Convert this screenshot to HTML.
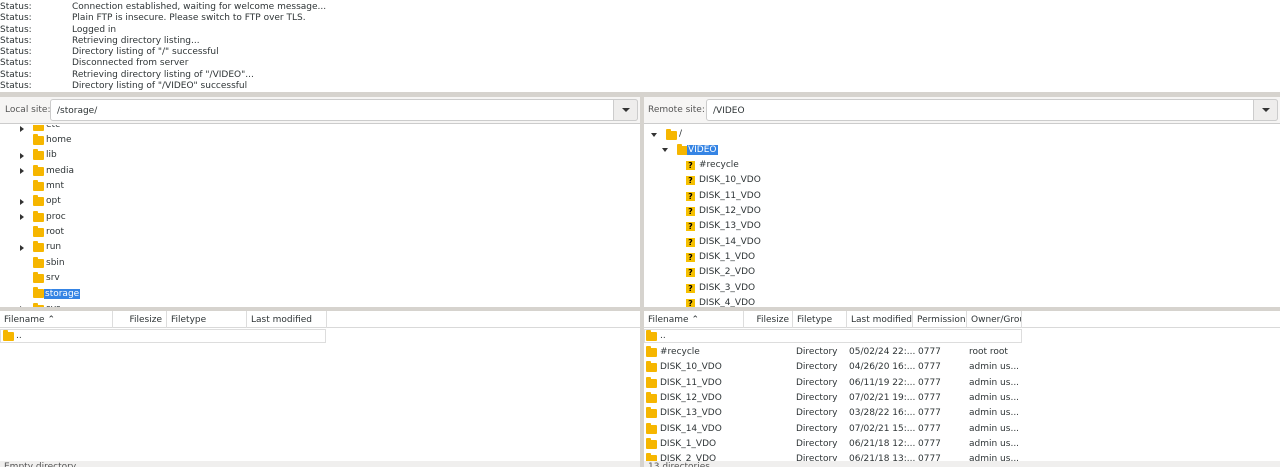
<!DOCTYPE html>
<html><head><style>
*{margin:0;padding:0;box-sizing:border-box}
body{width:1280px;height:467px;overflow:hidden;background:#fff;font-family:"DejaVu Sans","Liberation Sans",sans-serif;font-size:9px;color:#2e3436;position:relative}
.a{position:absolute;white-space:nowrap}
.f{position:absolute;width:11px;height:9px;background:#f6b600;border-radius:1px}
.f:before{content:"";position:absolute;left:0;top:-2px;width:5px;height:3px;background:#f6b600;border-radius:1px 1px 0 0}
.q{position:absolute;width:9px;height:9px;background:#f6c000;color:#000;font-weight:bold;font-size:8px;line-height:9px;text-align:center}
.tri{position:absolute;width:0;height:0;border-left:4px solid #333;border-top:3px solid transparent;border-bottom:3px solid transparent}
.trd{position:absolute;width:0;height:0;border-top:4px solid #333;border-left:3px solid transparent;border-right:3px solid transparent}
.sep{position:absolute;background:#d6d3ce}
.hdr{position:absolute;height:17px;background:#fff;border-bottom:1px solid #d9d9d9}
.hc{position:absolute;top:0;height:17px;line-height:18px;border-right:1px solid #ddd;padding-left:4px}
.sel{background:#3584e4;color:#fff;padding:0 1px}
</style></head><body>
<div class="a" style="left:0;top:2px;line-height:11.3px">Status:<br>Status:<br>Status:<br>Status:<br>Status:<br>Status:<br>Status:<br>Status:</div>
<div class="a" style="left:72px;top:2px;line-height:11.3px">Connection established, waiting for welcome message...<br>Plain FTP is insecure. Please switch to FTP over TLS.<br>Logged in<br>Retrieving directory listing...<br>Directory listing of "/" successful<br>Disconnected from server<br>Retrieving directory listing of "/VIDEO"...<br>Directory listing of "/VIDEO" successful</div>
<div class="sep" style="left:0;top:92px;width:1280px;height:5px"></div>
<div class="sep" style="left:640px;top:92px;width:4px;height:375px"></div>
<div class="a" style="left:0;top:97px;width:640px;height:27px;background:#f6f5f4;border-bottom:1px solid #ccc"></div>
<div class="a" style="left:644px;top:97px;width:636px;height:27px;background:#f6f5f4;border-bottom:1px solid #ccc"></div>
<div class="a" style="left:5px;top:105px;color:#555">Local site:</div>
<div class="a" style="left:50px;top:99px;width:588px;height:22px;background:#fff;border:1px solid #ccc;border-radius:3px;padding:6px 6px">/storage/</div>
<div class="a" style="left:613px;top:99px;width:25px;height:22px;background:#eeedec;border:1px solid #ccc;border-radius:0 3px 3px 0"></div>
<div class="trd" style="left:622px;top:108px;border-top-width:4px;border-left-width:4px;border-right-width:4px"></div>
<div class="a" style="left:648px;top:105px;color:#555">Remote site:</div>
<div class="a" style="left:706px;top:99px;width:572px;height:22px;background:#fff;border:1px solid #ccc;border-radius:3px;padding:6px 6px">/VIDEO</div>
<div class="a" style="left:1253px;top:99px;width:25px;height:22px;background:#eeedec;border:1px solid #ccc;border-radius:0 3px 3px 0"></div>
<div class="trd" style="left:1262px;top:108px;border-top-width:4px;border-left-width:4px;border-right-width:4px"></div>
<div class="a" style="left:0;top:125px;width:640px;height:182px;overflow:hidden">
<div style="position:absolute;left:0;top:1px;width:640px;height:190px">
<div class="f" style="left:33px;top:-4px"></div><div class="a" style="left:46px;top:-6px">etc</div>
<div class="tri" style="left:20px;top:0px"></div>
<div class="f" style="left:33px;top:10px"></div><div class="a" style="left:46px;top:9px">home</div>
<div class="tri" style="left:20px;top:27px"></div><div class="f" style="left:33px;top:25px"></div><div class="a" style="left:46px;top:24px">lib</div>
<div class="tri" style="left:20px;top:42px"></div><div class="f" style="left:33px;top:41px"></div><div class="a" style="left:46px;top:40px">media</div>
<div class="f" style="left:33px;top:56px"></div><div class="a" style="left:46px;top:55px">mnt</div>
<div class="tri" style="left:20px;top:73px"></div><div class="f" style="left:33px;top:71px"></div><div class="a" style="left:46px;top:70px">opt</div>
<div class="tri" style="left:20px;top:88px"></div><div class="f" style="left:33px;top:87px"></div><div class="a" style="left:46px;top:86px">proc</div>
<div class="f" style="left:33px;top:102px"></div><div class="a" style="left:46px;top:101px">root</div>
<div class="tri" style="left:20px;top:119px"></div><div class="f" style="left:33px;top:117px"></div><div class="a" style="left:46px;top:116px">run</div>
<div class="f" style="left:33px;top:133px"></div><div class="a" style="left:46px;top:132px">sbin</div>
<div class="f" style="left:33px;top:148px"></div><div class="a" style="left:46px;top:147px">srv</div>
<div class="f" style="left:33px;top:163px"></div><div class="a" style="left:44px;top:161px;height:14px;line-height:14px"><span class="sel">storage</span></div>
<div class="tri" style="left:20px;top:180px"></div><div class="f" style="left:33px;top:179px"></div><div class="a" style="left:46px;top:178px">sys</div>
</div></div>
<div class="a" style="left:644px;top:126px;width:636px;height:181px;overflow:hidden">
<div class="trd" style="left:7px;top:7px"></div><div class="f" style="left:22px;top:5px"></div><div class="a" style="left:35px;top:3px">/</div>
<div class="trd" style="left:18px;top:22px"></div><div class="f" style="left:33px;top:20px"></div><div class="a" style="left:43px;top:17px;line-height:14px"><span class="sel">VIDEO</span></div>
<div class="q" style="left:42px;top:35px">?</div><div class="a" style="left:55px;top:34px">#recycle</div>
<div class="q" style="left:42px;top:50px">?</div><div class="a" style="left:55px;top:49px">DISK_10_VDO</div>
<div class="q" style="left:42px;top:66px">?</div><div class="a" style="left:55px;top:65px">DISK_11_VDO</div>
<div class="q" style="left:42px;top:81px">?</div><div class="a" style="left:55px;top:80px">DISK_12_VDO</div>
<div class="q" style="left:42px;top:96px">?</div><div class="a" style="left:55px;top:95px">DISK_13_VDO</div>
<div class="q" style="left:42px;top:112px">?</div><div class="a" style="left:55px;top:111px">DISK_14_VDO</div>
<div class="q" style="left:42px;top:127px">?</div><div class="a" style="left:55px;top:126px">DISK_1_VDO</div>
<div class="q" style="left:42px;top:142px">?</div><div class="a" style="left:55px;top:141px">DISK_2_VDO</div>
<div class="q" style="left:42px;top:158px">?</div><div class="a" style="left:55px;top:157px">DISK_3_VDO</div>
<div class="q" style="left:42px;top:173px">?</div><div class="a" style="left:55px;top:172px">DISK_4_VDO</div>
</div>
<div class="sep" style="left:0;top:307px;width:1280px;height:4px"></div>
<div class="hdr" style="left:0;top:311px;width:640px">
<div class="hc" style="left:0;width:113px">Filename &#8963;</div>
<div class="hc" style="left:113px;width:54px;text-align:right;padding-right:4px">Filesize</div>
<div class="hc" style="left:167px;width:80px">Filetype</div>
<div class="hc" style="left:247px;width:80px">Last modified</div>
</div>
<div class="a" style="left:0;top:329px;width:326px;height:14px;border:1px solid #ddd"></div>
<div class="f" style="left:3px;top:332px"></div><div class="a" style="left:16px;top:331px">..</div>
<div class="hdr" style="left:644px;top:311px;width:636px">
<div class="hc" style="left:0;width:100px">Filename &#8963;</div>
<div class="hc" style="left:100px;width:49px;text-align:right;padding-right:3px">Filesize</div>
<div class="hc" style="left:149px;width:54px">Filetype</div>
<div class="hc" style="left:203px;width:66px">Last modified</div>
<div class="hc" style="left:269px;width:54px;overflow:hidden">Permissions</div>
<div class="hc" style="left:323px;width:55px;overflow:hidden">Owner/Group</div>
</div>
<div class="a" style="left:644px;top:329px;width:378px;height:14px;border:1px solid #ddd"></div>
<div class="f" style="left:646px;top:332px"></div><div class="a" style="left:660px;top:331px">..</div>
<div class="a" style="left:646px;top:345px;line-height:15.35px">
<div style="position:relative;height:15.35px"><span class="f" style="left:0;top:3px"></span><span class="a" style="left:14px">#recycle</span><span class="a" style="left:150px">Directory</span><span class="a" style="left:203px">05/02/24 22:...</span><span class="a" style="left:272px">0777</span><span class="a" style="left:323px">root root</span></div>
<div style="position:relative;height:15.35px"><span class="f" style="left:0;top:3px"></span><span class="a" style="left:14px">DISK_10_VDO</span><span class="a" style="left:150px">Directory</span><span class="a" style="left:203px">04/26/20 16:...</span><span class="a" style="left:272px">0777</span><span class="a" style="left:323px">admin us...</span></div>
<div style="position:relative;height:15.35px"><span class="f" style="left:0;top:3px"></span><span class="a" style="left:14px">DISK_11_VDO</span><span class="a" style="left:150px">Directory</span><span class="a" style="left:203px">06/11/19 22:...</span><span class="a" style="left:272px">0777</span><span class="a" style="left:323px">admin us...</span></div>
<div style="position:relative;height:15.35px"><span class="f" style="left:0;top:3px"></span><span class="a" style="left:14px">DISK_12_VDO</span><span class="a" style="left:150px">Directory</span><span class="a" style="left:203px">07/02/21 19:...</span><span class="a" style="left:272px">0777</span><span class="a" style="left:323px">admin us...</span></div>
<div style="position:relative;height:15.35px"><span class="f" style="left:0;top:3px"></span><span class="a" style="left:14px">DISK_13_VDO</span><span class="a" style="left:150px">Directory</span><span class="a" style="left:203px">03/28/22 16:...</span><span class="a" style="left:272px">0777</span><span class="a" style="left:323px">admin us...</span></div>
<div style="position:relative;height:15.35px"><span class="f" style="left:0;top:3px"></span><span class="a" style="left:14px">DISK_14_VDO</span><span class="a" style="left:150px">Directory</span><span class="a" style="left:203px">07/02/21 15:...</span><span class="a" style="left:272px">0777</span><span class="a" style="left:323px">admin us...</span></div>
<div style="position:relative;height:15.35px"><span class="f" style="left:0;top:3px"></span><span class="a" style="left:14px">DISK_1_VDO</span><span class="a" style="left:150px">Directory</span><span class="a" style="left:203px">06/21/18 12:...</span><span class="a" style="left:272px">0777</span><span class="a" style="left:323px">admin us...</span></div>
<div style="position:relative;height:15.35px"><span class="f" style="left:0;top:3px"></span><span class="a" style="left:14px">DISK_2_VDO</span><span class="a" style="left:150px">Directory</span><span class="a" style="left:203px">06/21/18 13:...</span><span class="a" style="left:272px">0777</span><span class="a" style="left:323px">admin us...</span></div>
</div>
<div class="a" style="left:0;top:461px;width:640px;height:6px;background:#f0efee;overflow:hidden"><span class="a" style="left:4px;top:1px;color:#555">Empty directory.</span></div>
<div class="a" style="left:644px;top:461px;width:636px;height:6px;background:#f0efee;overflow:hidden"><span class="a" style="left:4px;top:1px;color:#555">13 directories</span></div>
</body></html>
